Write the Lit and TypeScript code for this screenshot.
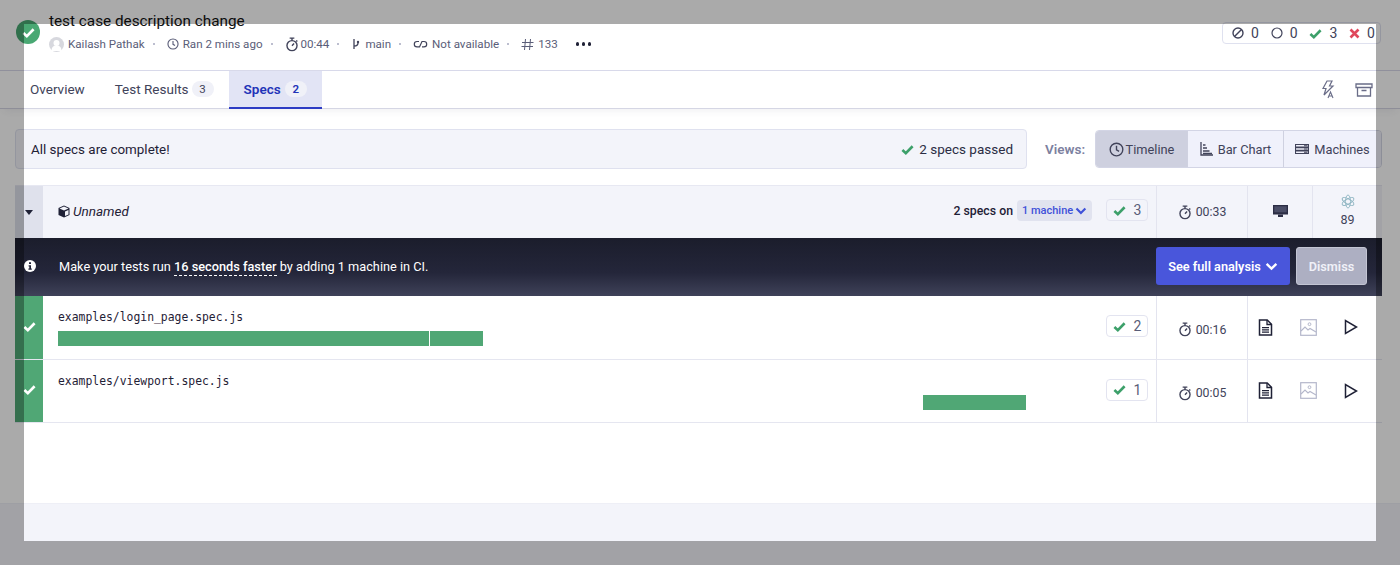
import { LitElement, html, css } from "lit";
import { customElement } from "lit/decorators.js";

const check = (c: string, s = 13) => html`<svg width=${s} height=${s} viewBox="0 0 14 14"><path d="M1.500 7.500 5.200 11 12.500 3.500" fill="none" stroke=${c} stroke-width="2.800"/></svg>`;
const chevron = (c: string, s = 12) => html`<svg width=${s} height=${s} viewBox="0 0 12 12"><path d="M1.500 3.500 6 8l4.500-4.500" fill="none" stroke=${c} stroke-width="2.200"/></svg>`;
const stopwatch = (c = "#41435a") => html`<svg width="14" height="15" viewBox="0 0 15 16"><circle cx="7.500" cy="9.200" r="5.400" fill="none" stroke=${c} stroke-width="1.500"/><path d="M5 1.200h5M7.500 1.200v2.400M7.500 9.400l2.200-2.400M12 3.600l1.200 1.200" fill="none" stroke=${c} stroke-width="1.500"/></svg>`;
const clock = (s = 13, c = "#5a5d78") => html`<svg width=${s} height=${s} viewBox="0 0 14 14"><circle cx="7" cy="7" r="5.900" fill="none" stroke=${c} stroke-width="1.300"/><path d="M7 3.600V7.400l2.400 1.400" fill="none" stroke=${c} stroke-width="1.300"/></svg>`;
const docIcon = html`<svg width="15" height="17" viewBox="0 0 15 17"><path d="M1.500 1h7.700l4.300 4.300V16h-12z" fill="none" stroke="#1f2136" stroke-width="1.500"/><path d="M9 1v4.500h4.500M4 8.600h7M4 10.900h7M4 13.200h7" fill="none" stroke="#1f2136" stroke-width="1.300"/></svg>`;
const imgIcon = html`<svg width="17" height="17" viewBox="0 0 17 17"><rect x=".7" y=".7" width="15.600" height="15.600" fill="none" stroke="#b4b7cb" stroke-width="1.200"/><circle cx="9.500" cy="5.200" r="1.400" fill="none" stroke="#b4b7cb"/><path d="M1 12l4-4 3 3 2-1.500 6 3.500" fill="none" stroke="#b4b7cb" stroke-width="1.100"/></svg>`;
const playIcon = html`<svg width="14" height="16" viewBox="0 0 14 16"><path d="M1.500 1.500v13l11-6.500z" fill="none" stroke="#1f2136" stroke-width="1.500"/></svg>`;

const rows = [
  { name: "examples/login_page.spec.js", count: 2, time: "00:16", offset: 0, bars: [371, 53] },
  { name: "examples/viewport.spec.js", count: 1, time: "00:05", offset: 865, bars: [103] },
];

@customElement("app-root")
export class AppRoot extends LitElement {
  static styles = css`
    :host { display: block; }
    * { box-sizing: border-box; }
    .page { position: relative; width: 1400px; height: 565px; overflow: hidden; background: #fff; display: flex; flex-direction: column; font-family: Roboto, "Liberation Sans", sans-serif; color: #1f2136; }
    .veil { position: absolute; left: 24px; top: 24px; width: 1352px; height: 517px; box-shadow: 0 0 0 1500px rgba(0,0,0,.335); pointer-events: none; z-index: 5; }
    .header { height: 71px; flex: none; border-bottom: 1.500px solid #d8d9ea; display: flex; padding: 12px 19px 0 16px; position: relative; }
    .status-badge { width: 24px; height: 24px; border-radius: 50%; background: #49a873; display: flex; align-items: center; justify-content: center; margin-top: 8px; flex: none; }
    .head-text { margin-left: 9px; flex: 1; }
    .title { font-size: 15.300px; line-height: 18px; color: #111; white-space: nowrap; }
    .meta { display: flex; align-items: center; height: 20px; margin-top: 4px; font-size: 11.600px; color: #5a5d78; white-space: nowrap; }
    .meta-item { display: flex; align-items: center; gap: 4px; }
    .watch { gap: 2px; }
    .sep { width: 2px; height: 2px; border-radius: 50%; background: #a6a9bf; margin: 0 12px 0 8px; }
    .more { margin-left: 18px; display: flex; gap: 2.500px; }
    .more i { width: 3.500px; height: 3.500px; border-radius: 50%; background: #1f2136; display: block; }
    .stats { display: flex; align-items: center; height: 22px; width: 159px; margin-top: 10px; padding: 0 5px 0 9px; border: 1px solid #dfe1ef; border-radius: 4px; justify-content: space-between; font-size: 14px; color: #41435a; flex: none; }
    .stat { display: flex; align-items: center; gap: 7px; }
    .tabs { height: 38px; flex: none; display: flex; align-items: stretch; border-bottom: 1.500px solid #d5d6e4; padding: 0 27px 0 30px; box-shadow: 0 5px 8px -4px rgba(60,60,90,.09); font-size: 13.500px; color: #41435a; }
    .tab { display: flex; align-items: center; margin-right: 30px; gap: 3px; padding-bottom: 2px; }
    .pill { min-width: 22px; height: 16px; border-radius: 8px; background: #f0f1f8; font-size: 11.500px; display: flex; align-items: center; justify-content: center; }
    .tab.active { margin: 0 0 -1px -15px; padding: 0 7px 0 15px; width: 93px; background: #e2e4f5; color: #2233b8; font-weight: 600; border-bottom: 2.500px solid #2d3cc4; gap: 4px; }
    .spacer { flex: 1; }
    .tool-icons { display: flex; align-items: center; gap: 19px; }
    .main { padding: 20px 18px 0 15px; flex: 1; display: flex; flex-direction: column; min-height: 0; }
    .top { display: flex; align-items: center; height: 40px; }
    .complete { width: 1012px; height: 40px; background: #f3f4fa; border: 1px solid #dfe1ef; border-radius: 4px; display: flex; align-items: center; justify-content: space-between; padding: 0 13px 0 15px; font-size: 13.400px; color: #1f2136; }
    .passed { display: flex; align-items: center; gap: 5px; color: #2b2d44; font-size: 13.500px; }
    .views-label { margin-left: 18px; width: 50px; font-size: 13.500px; font-weight: 600; color: #7d819f; }
    .views { display: flex; height: 38px; border: 1px solid #d3d5e5; border-radius: 4px; overflow: hidden; font-size: 12.800px; color: #41435a; flex: none; }
    .view { display: flex; align-items: center; justify-content: center; gap: 4px; background: #f0f1fb; border-left: 1px solid #cfd1e0; }
    .view.on { width: 91px; background: #ced0df; border-left: 0; gap: 2px; }
    .view.b { width: 96px; gap: 5px; }
    .view.m { width: 98px; gap: 5px; }
    .table { margin-top: 16px; border-top: 1.500px solid #e7e8f2; }
    .group { display: flex; height: 52px; background: #f3f4fa; }
    .toggle { width: 28px; background: #dfe1ec; display: flex; align-items: center; justify-content: center; flex: none; }
    .tri { width: 0; height: 0; border: 4px solid transparent; border-top: 5px solid #1f2136; border-bottom: 0; }
    .gname { margin-left: 15px; padding-bottom: 2px; display: flex; align-items: center; gap: 3px; font-style: italic; font-size: 13.500px; flex: 1; color: #1f2136; }
    .gsum { display: flex; align-items: center; font-size: 12.300px; gap: 4px; margin-top: -3px; }
    .gsum b { font-weight: 500; }
    .mach { display: flex; align-items: center; gap: 2px; height: 21px; padding: 0 5px; width: 75px; background: #e1e3ef; border-radius: 4px; color: #3f51d9; font-size: 11px; font-weight: 500; white-space: nowrap; }
    .chip { display: flex; align-items: center; justify-content: center; gap: 8px; width: 42px; height: 22px; border: 1px solid #e3e4f0; border-radius: 4px; font-size: 14px; color: #5a5d78; flex: none; }
    .gchip { margin: -4px 8px 0 14px; align-self: center; }
    .cell { flex: none; display: flex; align-items: center; justify-content: center; gap: 4px; border-left: 1px solid #e3e4ef; font-size: 12.300px; color: #41435a; }
    .time { width: 91px; }
    .mon { width: 65px; padding-bottom: 3px; }
    .elec { width: 70px; flex-direction: column; gap: 3px; font-size: 12.500px; padding-bottom: 4px; }
    .banner { height: 58px; background: linear-gradient(#1b1d2c, #24263a 60%, #3f4259); display: flex; align-items: center; color: #fff; font-size: 12.750px; padding: 0 15px 2px 0; }
    .info { width: 28px; display: flex; justify-content: center; flex: none; padding-left: 2px; }
    .bmsg { margin-left: 16px; flex: 1; }
    .bmsg span { font-weight: 500; border-bottom: 1px dashed #fff; padding-bottom: 1px; }
    .btn { height: 38px; border-radius: 3px; display: flex; align-items: center; justify-content: center; font-size: 12.700px; font-weight: 600; color: #fff; }
    .see { width: 134px; background: #4956db; gap: 4px; }
    .dis { width: 71px; background: #adafc2; margin-left: 6px; border: 1px solid #c3c5d3; color: #f0f1f8; }
    .row { display: flex; height: 63.500px; border-bottom: 1.500px solid #e5e6f0; background: #fff; }
    .ok { width: 28px; background: #50a775; display: flex; align-items: center; justify-content: center; flex: none; padding-bottom: 2px; }
    .rmain { flex: 1; padding: 13px 0 0 15px; min-width: 0; }
    .fname { font-family: "DejaVu Sans Mono", monospace; font-size: 11.400px; line-height: 16px; color: #1f2136; }
    .bars { display: flex; gap: 1px; height: 15px; margin-top: 6px; }
    .bar { background: #50a775; height: 15px; }
    .rchip { margin: -2px 8px 0 14px; align-self: center; }
    .rtime { padding-top: 5px; }
    .acts { width: 135px; flex: none; border-left: 1px solid #e3e4ef; display: flex; align-items: center; padding: 0 0 0 10px; gap: 27px; }
    .footer { height: 62px; flex: none; background: #f3f4fa; border-top: 1px solid #eeeff6; }
  `;

  render() {
    return html`<div class="page">
      <div class="header">
        <div class="status-badge">${check("#fff", 13)}</div>
        <div class="head-text">
          <div class="title">test case description change</div>
          <div class="meta">
            <span class="meta-item"><svg width="15" height="15" viewBox="0 0 15 15"><circle cx="7.500" cy="7.500" r="7.500" fill="#d7d8de"/><circle cx="7.500" cy="6" r="3" fill="#fff"/><path d="M2.500 14c0-4 2-5.500 5-5.500s5 1.500 5 5.500z" fill="#fff"/></svg><span>Kailash Pathak</span></span>
            <i class="sep"></i>
            <span class="meta-item">${clock(12)}<span>Ran 2 mins ago</span></span>
            <i class="sep"></i>
            <span class="meta-item watch">${stopwatch("#41435a")}<span>00:44</span></span>
            <i class="sep"></i>
            <span class="meta-item"><svg width="10" height="12" viewBox="0 0 10 12"><path d="M3 1v10M3 8c3 0 4-1 4-3" fill="none" stroke="#41435a" stroke-width="1.300"/><circle cx="7" cy="4" r="1.200" fill="#41435a"/></svg><span>main</span></span>
            <i class="sep"></i>
            <span class="meta-item"><svg width="15" height="10" viewBox="0 0 15 10"><path d="M6 2.500H4a2.700 2.700 0 0 0 0 5.400h2.500L9 2.500h2a2.700 2.700 0 0 1 0 5.400H9" fill="none" stroke="#41435a" stroke-width="1.200"/></svg><span>Not available</span></span>
            <i class="sep"></i>
            <span class="meta-item"><svg width="13" height="13" viewBox="0 0 13 13"><path d="M4.500 1 3.500 12M9.500 1l-1 11M1 4.500h11.500M.5 8.500H12" fill="none" stroke="#5a5d78" stroke-width="1"/></svg><span>133</span></span>
            <span class="more"><i></i><i></i><i></i></span>
          </div>
        </div>
        <div class="stats">
          <span class="stat"><svg width="12" height="12" viewBox="0 0 12 12"><circle cx="6" cy="6" r="5" fill="none" stroke="#41435a" stroke-width="1.400"/><path d="M2.500 9.500l7-7" stroke="#41435a" stroke-width="1.400"/></svg>0</span>
          <span class="stat"><svg width="12" height="12" viewBox="0 0 12 12"><circle cx="6" cy="6" r="5" fill="none" stroke="#41435a" stroke-width="1.200"/></svg>0</span>
          <span class="stat">${check("#3da06a", 13)}3</span>
          <span class="stat"><svg width="11" height="11" viewBox="0 0 11 11"><path d="M1.500 1.500l8 8M9.500 1.500l-8 8" stroke="#e0485c" stroke-width="2.600"/></svg>0</span>
        </div>
      </div>
      <div class="tabs">
        <div class="tab">Overview</div>
        <div class="tab">Test Results <span class="pill">3</span></div>
        <div class="tab active">Specs <span class="pill">2</span></div>
        <div class="spacer"></div>
        <div class="tool-icons">
          <svg width="15" height="19" viewBox="0 0 15 19"><path d="M6 1h5L8.500 6H12L3 15l2-6.500H2z" fill="none" stroke="#6a6d88" stroke-width="1.200"/><path d="M7 18l2.500-6 2.500 6M8 16h3" fill="none" stroke="#6a6d88" stroke-width="1.100"/></svg>
          <svg width="18" height="14" viewBox="0 0 18 14"><path d="M1 1h16v3.500H1zM2.500 4.500V13h13V4.500M6.500 7.500h5" fill="none" stroke="#6a6d88" stroke-width="1.300"/></svg>
        </div>
      </div>
      <div class="main">
        <div class="top">
          <div class="complete"><span>All specs are complete!</span><span class="passed">${check("#3da06a", 13)}2 specs passed</span></div>
          <span class="views-label">Views:</span>
          <div class="views">
            <div class="view on">${clock(15, "#41435a")}Timeline</div>
            <div class="view b"><svg width="13" height="14" viewBox="0 0 13 14"><path d="M1 0v13h12" fill="none" stroke="#41435a" stroke-width="1.300"/><path d="M3 3h2.500M3 6h4M3 9h6.500M3 11.500h9" stroke="#41435a" stroke-width="1.600"/></svg>Bar Chart</div>
            <div class="view m"><svg width="14" height="12" viewBox="0 0 14 12"><path d="M.5 1.500h13v2.500H.5zM.5 4.800h13v2.400H.5zM.5 8h13v2.500H.5z" fill="none" stroke="#41435a" stroke-width="1.100"/><path d="M9 2.700h3.500M9 6h3.500M9 9.300h3.500" stroke="#41435a" stroke-width="1.100"/></svg>Machines</div>
          </div>
        </div>
        <div class="table">
          <div class="group">
            <div class="toggle"><i class="tri"></i></div>
            <div class="gname"><svg width="12" height="13" viewBox="0 0 12 13"><path d="M6 .5 11.500 3v7L6 12.500.5 10V3z" fill="#1f2136"/><path d="M1.500 3.500 6 5.500l4.500-2-4.500-2zM7 6.500v4.500l3.500-1.600V5z" fill="#f3f4fa"/></svg>Unnamed</div>
            <div class="gsum"><b>2 specs on</b><span class="mach">1 machine ${chevron("#3f51d9", 12)}</span></div>
            <div class="chip gchip">${check("#3da06a", 13)}3</div>
            <div class="cell time">${stopwatch()}00:33</div>
            <div class="cell mon"><svg width="15" height="12" viewBox="0 0 15 12"><path d="M0 0h15v9.500H0z" fill="#2b2d44"/><path d="M1.300 1.300h12.400v6H1.300z" fill="#4a4d66"/><path d="M5 9.500h5V12H5z" fill="#2b2d44"/></svg></div>
            <div class="cell elec"><svg width="14" height="15" viewBox="0 0 14 15"><g fill="none" stroke="#8fb5c2" stroke-width=".9"><ellipse cx="7" cy="7.500" rx="6.500" ry="2.500" transform="rotate(30 7 7.500)"/><ellipse cx="7" cy="7.500" rx="6.500" ry="2.500" transform="rotate(-30 7 7.500)"/><ellipse cx="7" cy="7.500" rx="6.500" ry="2.500" transform="rotate(90 7 7.500)"/></g></svg>89</div>
          </div>
          <div class="banner">
            <div class="info"><svg width="12" height="12" viewBox="0 0 12 12"><circle cx="6" cy="6" r="6" fill="#fff"/><path d="M5 2.300h2v1.800H5zM4.600 5.200h2.400v3.300h.8v1.200H4.400V8.500h.9V6.400h-.7z" fill="#1f2136"/></svg></div>
            <div class="bmsg">Make your tests run <span>16 seconds faster</span> by adding 1 machine in CI.</div>
            <div class="btn see">See full analysis ${chevron("#fff", 13)}</div>
            <div class="btn dis">Dismiss</div>
          </div>
          ${rows.map((r) => html`<div class="row">
            <div class="ok">${check("#fff", 13)}</div>
            <div class="rmain">
              <div class="fname">${r.name}</div>
              <div class="bars" style="margin-left:${r.offset}px">${r.bars.map((w) => html`<div class="bar" style="width:${w}px"></div>`)}</div>
            </div>
            <div class="chip rchip">${check("#3da06a", 13)}${r.count}</div>
            <div class="cell time rtime">${stopwatch()}${r.time}</div>
            <div class="acts">${docIcon}${imgIcon}${playIcon}</div>
          </div>`)}
        </div>
        <div class="spacer"></div>
      </div>
      <div class="footer"></div>
      <div class="veil"></div>
    </div>`;
  }
}
